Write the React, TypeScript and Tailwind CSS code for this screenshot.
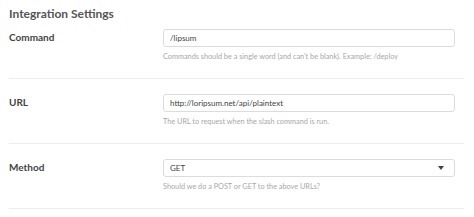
export default function App() {
  const rows = [
    {
      label: "Command",
      value: "/lipsum",
      hint: "Commands should be a single word (and can't be blank). Example: /deploy",
    },
    {
      label: "URL",
      value: "http://loripsum.net/api/plaintext",
      hint: "The URL to request when the slash command is run.",
    },
    {
      label: "Method",
      value: "GET",
      hint: "Should we do a POST or GET to the above URLs?",
      select: true,
    },
  ];

  return (
    <div
      className="w-[474px] h-[217px] bg-white pl-[9px] pr-[10px] overflow-hidden"
      style={{ fontFamily: "Lato, 'Open Sans', sans-serif" }}
    >
      <h1 className="pt-[5px] text-[12px] leading-[18px] font-bold text-[#555]">
        Integration Settings
      </h1>

      {rows.map((row, i) => (
        <div
          key={row.label}
          className={`flex border-b border-[#ececec] pb-[16px] ${i === 0 ? "pt-[6px]" : "pt-[15px]"}`}
        >
          <div className="w-[154px] shrink-0 pt-[1px] text-[10px] leading-[14px] font-bold text-[#444]">
            {row.label}
          </div>
          <div className="flex-1 pr-[9px]">
            <div className="h-[18px] flex items-center justify-between rounded-[3px] border border-[#dcdcdc] px-[6px] text-[8px] text-[#444]">
              <span>{row.value}</span>
              {row.select && (
                <svg width="6" height="4" viewBox="0 0 6 4" className="mr-[4px]">
                  <path d="M0 0h6L3 4z" fill="#444" />
                </svg>
              )}
            </div>
            <p className="mt-[5px] text-[7.3px] leading-[10px] text-[#a8a8a8]">{row.hint}</p>
          </div>
        </div>
      ))}
    </div>
  );
}
